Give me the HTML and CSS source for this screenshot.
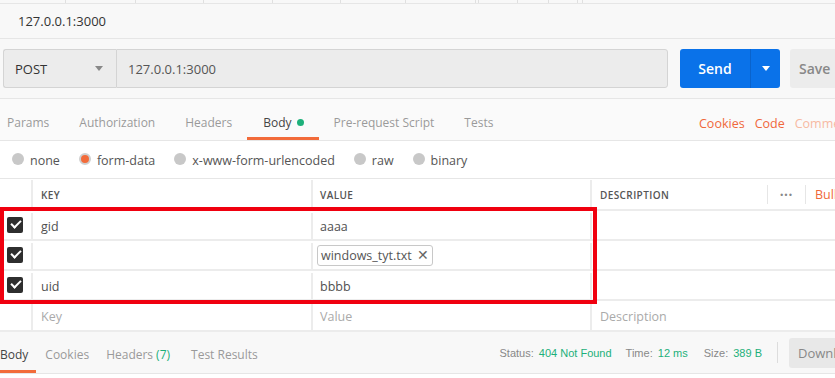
FILE: index.html
```html
<!DOCTYPE html>
<html lang="en">
  <head>
    <meta charset="UTF-8" />
    <title>127.0.0.1:3000</title>
    <link rel="stylesheet" href="styles.css">
  </head>
  <body>
    <div class="tab-strip">
      <span style="left: 65px"></span>
      <span style="left: 135px"></span>
      <span style="left: 203px"></span>
      <span style="left: 272px"></span>
      <span style="left: 340px"></span>
      <span style="left: 405px"></span>
      <span style="left: 475px"></span>
      <span style="left: 478px"></span>
      <span style="left: 517px"></span>
      <span style="left: 548px"></span>
      <span style="left: 577px"></span>
      <span style="left: 582px"></span>
    </div>

    <div class="title-bar">127.0.0.1:3000</div>

    <!-- request line -->
    <div class="url-bar">
      <div class="method">
        <span>POST</span>
        <span class="caret"></span>
      </div>
      <div class="url-input">127.0.0.1:3000</div>
      <div class="send-btn">
        <span class="send-label">Send</span>
        <span class="send-drop"><span class="caret white"></span></span>
      </div>
      <div class="save-btn">Save</div>
    </div>

    <!-- request tabs -->
    <div class="req-tabs">
      <a class="tab">Params</a>
      <a class="tab">Authorization</a>
      <a class="tab">Headers</a>
      <a class="tab active">Body <span class="dot"></span></a>
      <a class="tab">Pre-request Script</a>
      <a class="tab">Tests</a>
      <div class="tab-links">
        <a>Cookies</a>
        <a>Code</a>
        <a class="faded">Comments</a>
      </div>
    </div>

    <div class="body-types">
      <label><span class="radio"></span>none</label>
      <label><span class="radio on"></span>form-data</label>
      <label><span class="radio"></span>x-www-form-urlencoded</label>
      <label><span class="radio"></span>raw</label>
      <label><span class="radio"></span>binary</label>
    </div>

    <!-- key / value editor -->
    <div class="kv-table">
      <div class="kv-row head">
        <div class="c-check"></div>
        <div class="c-key">KEY</div>
        <div class="c-value">VALUE</div>
        <div class="c-desc">DESCRIPTION</div>
        <div class="c-more">&bull;&bull;&bull;</div>
        <div class="c-bulk">Bulk Edit</div>
      </div>
      <div class="kv-row">
        <div class="c-check"><span class="check"></span></div>
        <div class="c-key">gid</div>
        <div class="c-value">aaaa</div>
        <div class="c-desc"></div>
      </div>
      <div class="kv-row">
        <div class="c-check"><span class="check"></span></div>
        <div class="c-key"></div>
        <div class="c-value"><span class="file-chip">windows_tyt.txt <span class="x">&#x2715;</span></span></div>
        <div class="c-desc"></div>
      </div>
      <div class="kv-row">
        <div class="c-check"><span class="check"></span></div>
        <div class="c-key">uid</div>
        <div class="c-value">bbbb</div>
        <div class="c-desc"></div>
      </div>
      <div class="kv-row placeholder">
        <div class="c-check"></div>
        <div class="c-key">Key</div>
        <div class="c-value">Value</div>
        <div class="c-desc">Description</div>
      </div>
      <div class="highlight"></div>
    </div>

    <!-- response -->
    <div class="res-bar">
      <a class="tab active">Body</a>
      <a class="tab">Cookies</a>
      <a class="tab">Headers <span class="green">(7)</span></a>
      <a class="tab tab-wide">Test Results</a>
      <div class="res-meta">
        <span>Status: <b>404 Not Found</b></span>
        <span>Time: <b>12 ms</b></span>
        <span class="size">Size: <b>389 B</b></span>
      </div>
      <div class="download-btn">Download</div>
    </div>
  </body>
</html>
```

FILE: styles.css
```css
body {
  margin: 0;
  font-family: "Open Sans", sans-serif;
  font-size: 12.5px;
  color: #505050;
  background: #fff;
  width: 835px;
  height: 378px;
  overflow: hidden;
}

a {
  cursor: pointer;
}

/* top tab strip remnant */
.tab-strip {
  position: relative;
  height: 3px;
  background: #f8f8f8;
  border-bottom: 1px solid #e6e6e6;
}

.tab-strip span {
  position: absolute;
  top: 0;
  width: 1px;
  height: 3px;
  background: #e0e0e0;
}

.title-bar {
  height: 34px;
  line-height: 34px;
  padding-left: 18px;
  font-size: 13px;
  color: #333;
  background: #f8f8f8;
  border-bottom: 1px solid #e6e6e6;
}

/* Request url line */
.url-bar {
  display: flex;
  align-items: stretch;
  height: 39px;
  padding: 10px 0 10px 3px;
  background: #f8f8f8;
  border-bottom: 1px solid #e6e6e6;
}

.method {
  width: 113px;
  display: flex;
  align-items: center;
  justify-content: space-between;
  padding: 0 13px 0 11px;
  box-sizing: border-box;
  background: #ececec;
  border: 1px solid #d4d4d4;
  border-right: none;
  border-radius: 3px 0 0 3px;
  font-size: 13px;
  color: #333;
}

.caret {
  width: 0;
  height: 0;
  border-left: 4px solid transparent;
  border-right: 4px solid transparent;
  border-top: 5px solid #888;
}

.caret.white {
  border-top-color: #fff;
}

.url-input {
  width: 552px;
  display: flex;
  align-items: center;
  padding-left: 11px;
  box-sizing: border-box;
  background: #ececec;
  border: 1px solid #d4d4d4;
  border-radius: 0 3px 3px 0;
  font-size: 13px;
  color: #555;
}

.send-btn {
  margin-left: 12px;
  width: 100px;
  display: flex;
  background: #0a72e9;
  border-radius: 3px;
  color: #fff;
  font-weight: 600;
  font-size: 14px;
}

.send-label {
  width: 70px;
  display: flex;
  align-items: center;
  justify-content: center;
}

.send-drop {
  flex: 1;
  display: flex;
  align-items: center;
  justify-content: center;
  border-left: 1px solid #0a63cc;
}

.save-btn {
  margin-left: 10px;
  flex: 1;
  display: flex;
  align-items: center;
  padding-left: 9px;
  background: #ececec;
  border-radius: 3px 0 0 3px;
  color: #888;
  font-weight: 600;
  font-size: 14px;
}

/* Request tabs */
.req-tabs {
  display: flex;
  align-items: stretch;
  height: 41px;
  background: #fafafa;
  border-bottom: 1px solid #e6e6e6;
}

.tab {
  display: flex;
  align-items: center;
  padding: 8px 15px 0;
  color: #9a9a9a;
  font-size: 12px;
  border-bottom: 3px solid transparent;
  box-sizing: border-box;
}

.req-tabs .tab:first-child {
  padding-left: 7px;
}

.req-tabs .tab.active {
  padding-left: 16px;
}

.tab.active {
  color: #444;
  border-bottom-color: #f26b3a;
}

.dot {
  display: inline-block;
  width: 7px;
  height: 7px;
  border-radius: 50%;
  background: #1db07a;
  margin-left: 5px;
}

.tab-links {
  margin-left: auto;
  display: flex;
  align-items: center;
  gap: 10px;
  padding-top: 8px;
  white-space: nowrap;
  width: 136px;
  overflow: hidden;
}

.tab-links a {
  color: #f0683a;
}

.tab-links a.faded {
  color: #f7b9a2;
}

/* body type radios */
.body-types {
  display: flex;
  align-items: center;
  height: 38px;
  padding-left: 12px;
  padding-top: 2px;
  box-sizing: border-box;
  border-bottom: 1px solid #e6e6e6;
}

.body-types label {
  display: flex;
  align-items: center;
  margin-right: 19px;
  color: #555;
}

.radio {
  width: 12px;
  height: 12px;
  border-radius: 50%;
  background: #c8c8c8;
  margin-right: 6px;
  margin-top: -3px;
  box-sizing: border-box;
}

.radio.on {
  background: #f26b3a;
  border: 2px solid #cfcfcf;
}

/* key value table */
.kv-table {
  position: relative;
}

.kv-row {
  display: flex;
  height: 30px;
  padding-top: 2px;
  border-bottom: 2px solid #ececec;
  box-sizing: border-box;
}

.kv-row.head {
  height: 32px;
  padding-top: 1px;
  font-size: 10px;
  font-weight: 600;
  color: #555;
  letter-spacing: 0.4px;
}

.kv-row > div {
  display: flex;
  align-items: center;
  box-sizing: border-box;
}

.c-check {
  width: 33px;
  justify-content: center;
  border-right: 2px solid #ececec;
}

.c-key {
  width: 280px;
  padding-left: 8px;
  border-right: 2px solid #ececec;
}

.c-value {
  width: 279px;
  padding-left: 7px;
  border-right: 2px solid #ececec;
}

.c-desc {
  flex: 1;
  padding-left: 8px;
}

.kv-row.head .c-desc {
  flex: none;
  width: 176px;
  border-right: 1px solid #e6e6e6;
  margin: 5px 0;
}

.c-more {
  width: 38px;
  justify-content: center;
  color: #888;
  font-size: 9px;
  letter-spacing: 1px;
  border-right: 1px solid #e6e6e6;
  margin: 5px 0;
}

.c-bulk {
  flex: 1;
  padding-left: 9px;
  color: #f0683a;
  font-size: 12.5px;
  font-weight: 400;
  letter-spacing: 0;
  white-space: nowrap;
  overflow: hidden;
}

.check {
  position: relative;
  width: 16px;
  height: 16px;
  border-radius: 2px;
  background: #2e2e2e;
  margin-left: -2px;
  margin-top: -2px;
}

.check::after {
  content: "";
  position: absolute;
  left: 4px;
  top: 3px;
  width: 8px;
  height: 4px;
  border-left: 2px solid #fff;
  border-bottom: 2px solid #fff;
  transform: rotate(-45deg);
}

.file-chip {
  display: inline-flex;
  align-items: center;
  height: 19px;
  padding: 0 3px 0 3px;
  border: 1px solid #c8c8c8;
  border-radius: 3px;
  color: #555;
  margin-left: -3px;
  margin-top: -2px;
}

.file-chip .x {
  margin-left: 5px;
  color: #666;
  font-size: 14px;
  line-height: 1;
}

.kv-row.placeholder {
  color: #aaa;
  height: 31px;
}

.highlight {
  position: absolute;
  left: 0;
  top: 28px;
  width: 597px;
  height: 97px;
  border: 4px solid #f0000f;
  box-sizing: border-box;
}

/* Response bar */
.res-bar {
  display: flex;
  align-items: stretch;
  height: 41px;
  background: #f8f8f8;
  border-bottom: 1px solid #e6e6e6;
}

.res-bar .tab {
  padding: 7px 8px 0 9px;
}

.res-bar .tab:first-child {
  padding-left: 0;
}

.res-bar .tab-wide {
  padding-left: 13px;
}

.res-bar .green {
  color: #1db07a;
  margin-left: 3px;
}

.res-meta {
  margin-left: auto;
  display: flex;
  align-items: center;
  gap: 14px;
  padding-right: 15px;
  margin-right: 11px;
  font-family: "Liberation Sans", Arial, sans-serif;
  font-size: 11px;
  color: #888;
  border-right: 1px solid #ddd;
  margin-top: 10px;
  margin-bottom: 10px;
}

.res-meta .size {
  margin-left: 2px;
}

.res-meta b {
  font-weight: normal;
  color: #1db07a;
  margin-left: 2px;
}

.download-btn {
  width: 46px;
  margin: 6px 0 5px;
  padding-left: 9px;
  display: flex;
  align-items: center;
  background: #e8e8e8;
  border-radius: 3px 0 0 3px;
  color: #888;
  font-size: 13px;
  white-space: nowrap;
  overflow: hidden;
  box-sizing: border-box;
}
```
